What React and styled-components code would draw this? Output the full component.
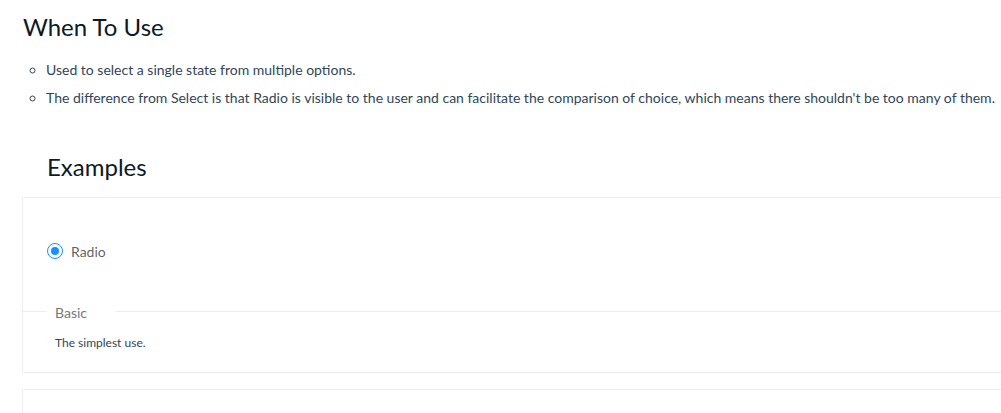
import React, { useState } from "react";
import styled, { createGlobalStyle } from "styled-components";

const GlobalStyle = createGlobalStyle`
  body {
    margin: 0;
    background: #fff;
    font-family: "Segoe UI", Lato, "Liberation Sans", sans-serif;
    color: #314659;
    overflow: hidden;
  }
`;

const Page = styled.div`
  padding: 0 0 0 22px;
`;

const Title = styled.h2`
  margin: 11px 0 0 1px;
  font-size: 24px;
  font-weight: 400;
  line-height: 32px;
  color: #0d1a26;
`;

const List = styled.ul`
  margin: 16px 0 0;
  padding-left: 24px;
  list-style: circle;

  li {
    font-size: 14px;
    line-height: 22px;
    margin-bottom: 6px;
    padding-left: 0;
  }
`;

const SubTitle = styled.h2`
  margin: 42px 0 0 25px;
  font-size: 24px;
  font-weight: 400;
  line-height: 32px;
  color: #0d1a26;
`;

const Card = styled.section`
  margin-top: ${(p) => p.$gap}px;
  margin-right: -20px;
  border: 1px solid #ebedf0;
  border-radius: 2px;
  height: ${(p) => p.$height}px;
  box-sizing: border-box;
`;

const Demo = styled.div`
  padding: 41px 24px 51px;
`;

const RadioLabel = styled.label`
  display: inline-flex;
  align-items: center;
  gap: 8px;
  font-size: 14px;
  color: rgba(0, 0, 0, 0.65);
  cursor: pointer;
`;

const RadioDot = styled.span`
  width: 16px;
  height: 16px;
  border-radius: 50%;
  border: 1px solid ${(p) => (p.$checked ? "#1890ff" : "#d9d9d9")};
  box-sizing: border-box;
  display: flex;
  align-items: center;
  justify-content: center;

  &::after {
    content: "";
    width: 8px;
    height: 8px;
    border-radius: 50%;
    background: #1890ff;
    opacity: ${(p) => (p.$checked ? 1 : 0)};
  }
`;

const Meta = styled.div`
  position: relative;
  border-top: 1px solid #ebedf0;
  padding: 21px 24px 0 32px;
`;

const MetaTitle = styled.div`
  position: absolute;
  top: -10px;
  left: 24px;
  padding: 0 28px 0 8px;
  background: #fff;
  font-size: 14px;
  line-height: 22px;
  color: #777;
`;

const MetaDesc = styled.p`
  margin: 0;
  font-size: 12px;
  line-height: 20px;
  color: #314659;
`;

export default function App() {
  const [checked, setChecked] = useState(true);
  return (
    <>
      <GlobalStyle />
      <Page>
        <Title>When To Use</Title>
        <List>
          <li>Used to select a single state from multiple options.</li>
          <li>
            The difference from Select is that Radio is visible to the user and
            can facilitate the comparison of choice, which means there
            shouldn't be too many of them.
          </li>
        </List>
        <SubTitle>Examples</SubTitle>
        <Card $gap={14} $height={176}>
          <Demo>
            <RadioLabel onClick={() => setChecked(!checked)}>
              <RadioDot $checked={checked} />
              Radio
            </RadioLabel>
          </Demo>
          <Meta>
            <MetaTitle>Basic</MetaTitle>
            <MetaDesc>The simplest use.</MetaDesc>
          </Meta>
        </Card>
        <Card $gap={16} $height={60} />
      </Page>
    </>
  );
}
